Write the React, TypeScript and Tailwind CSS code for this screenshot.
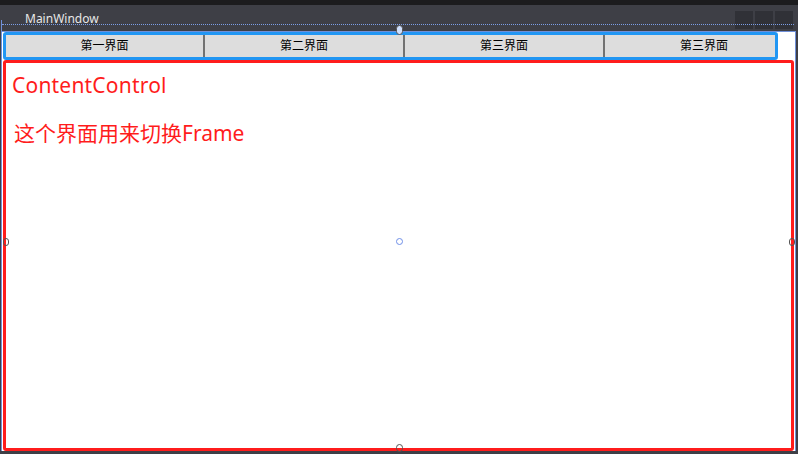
export default function App() {
  const tabs = ["第一界面", "第二界面", "第三界面", "第三界面"];
  const font = { fontFamily: '"Noto Sans", "Noto Sans CJK SC", sans-serif' };

  return (
    <div
      className="relative flex h-[454px] w-[798px] flex-col overflow-hidden bg-[#3e3f46]"
      style={font}
    >
      {/* top strip */}
      <div className="h-[5px] bg-[#1c1c1e]" />

      {/* title bar */}
      <div className="relative flex h-[26px] items-start justify-between">
        <span className="pl-[25px] pt-[7px] text-[12px] leading-[14px] text-[#e8e8e8]">
          MainWindow
        </span>
        <div className="mr-[5px] mt-[6px] flex gap-[2px]">
          <div className="h-[18px] w-[18px] bg-[#303137]" />
          <div className="h-[18px] w-[18px] bg-[#303137]" />
          <div className="h-[18px] w-[18px] bg-[#303137]" />
        </div>
        {/* dotted designer line */}
        <div className="absolute left-[2px] right-[4px] top-[19px] border-t border-dotted border-[#7b9de6]" />
        <div className="absolute left-[1px] top-[15px] h-[11px] w-px bg-[#6f8fd8]" />
      </div>

      {/* window body */}
      <div className="ml-[1px] mr-[2px] mb-[3px] flex flex-1 flex-col border-l border-r border-t border-[#6f8fd8] bg-white px-px">
        {/* tab bar */}
        <div className="flex h-[28px] w-[775px] overflow-hidden rounded-[3px] border-[3px] border-[#2196f3] bg-[#dddddd]">
          {tabs.map((t, i) => (
            <div
              key={i}
              className={`flex shrink-0 items-center justify-center text-[12px] text-black ${
                i === 0 ? "w-[197px]" : "w-[200px] border-l-2 border-[#727272]"
              }`}
            >
              {t}
            </div>
          ))}
        </div>

        {/* content control */}
        <div className="flex w-[791px] flex-1 flex-col rounded-[3px] border-[3px] border-[#ff1c1c] pl-[6px] pt-[8px] text-[21px] text-[#ff1c1c]">
          <span className="leading-[28px] tracking-[0.2px]">ContentControl</span>
          <span className="mt-[20px] pl-[2px] leading-[28px]">这个界面用来切换Frame</span>
        </div>
      </div>

      {/* designer adorners */}
      <span className="absolute left-[396px] top-[25px] h-[10px] w-[7px] rounded-full border border-[#555] bg-[#cfe0ff]" />
      <span className="absolute left-[396px] top-[238px] h-[7px] w-[7px] rounded-full border border-[#6f8fe8]" />
      <span className="absolute left-[3px] top-[238px] h-[8px] w-[6px] rounded-full border border-[#555]" />
      <span className="absolute left-[789px] top-[238px] h-[8px] w-[6px] rounded-full border border-[#555]" />
      <span className="absolute left-[396px] top-[444px] h-[8px] w-[7px] rounded-full border border-[#555]" />
    </div>
  );
}
